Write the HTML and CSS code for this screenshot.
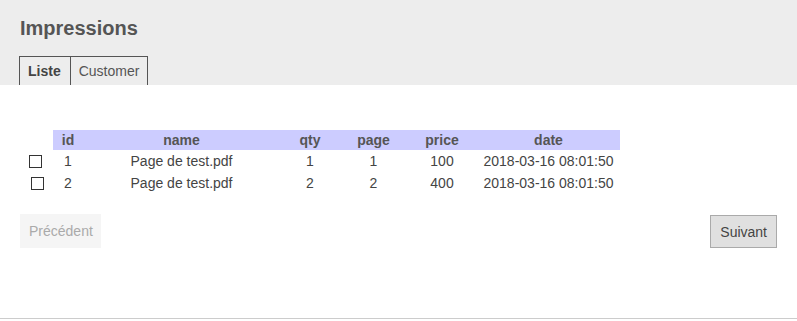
FILE: index.html
```html
<!DOCTYPE html>
<html>
<head>
    <meta charset="utf-8" />
    <title>Impressions</title>
    <link rel="stylesheet" href="styles.css">
</head>
<body>
    <div class="header">
        <h1>Impressions</h1>
        <div class="tabs">
            <a class="tab active" href="#">Liste</a>
            <a class="tab" href="#">Customer</a>
        </div>
    </div>

    <div class="content">
        <table class="list">
            <colgroup>
                <col class="c-check">
                <col class="c-id">
                <col class="c-name">
                <col class="c-qty">
                <col class="c-page">
                <col class="c-price">
                <col class="c-date">
            </colgroup>
            <thead>
                <tr>
                    <th class="check"></th>
                    <th>id</th>
                    <th>name</th>
                    <th>qty</th>
                    <th>page</th>
                    <th>price</th>
                    <th>date</th>
                </tr>
            </thead>
            <tbody>
                <tr>
                    <td class="check"><input type="checkbox"></td>
                    <td>1</td>
                    <td>Page de test.pdf</td>
                    <td>1</td>
                    <td>1</td>
                    <td>100</td>
                    <td>2018-03-16 08:01:50</td>
                </tr>
                <tr>
                    <td class="check"><input type="checkbox" class="shift"></td>
                    <td>2</td>
                    <td>Page de test.pdf</td>
                    <td>2</td>
                    <td>2</td>
                    <td>400</td>
                    <td>2018-03-16 08:01:50</td>
                </tr>
            </tbody>
        </table>

        <div class="pager">
            <button class="btn prev" disabled>Précédent</button>
            <button class="btn next">Suivant</button>
        </div>
    </div>
</body>
</html>
```

FILE: styles.css
```css
body {
    font-family: "Liberation Sans", Arial, sans-serif;
    font-size: 14px;
    color: #444;
    margin: 0;
    background: white;
}
.header {
    background: #ededed;
    padding: 17px 20px 0 19px;
}
h1 {
    margin: 0 0 16px 1px;
    font-size: 20px;
    line-height: 23px;
    color: #555;
}
.tabs {
    display: flex;
}
.tab {
    display: block;
    padding: 6px 9px 6px 8px;
    line-height: 16px;
    color: #555;
    text-decoration: none;
    border: 1px solid #555;
    border-bottom: none;
}
.tab + .tab {
    border-left: none;
    padding-right: 8px;
}
.tab.active {
    font-weight: bold;
    color: #444;
}
.content {
    padding: 45px 20px 0 20px;
    height: 188px;
    border-bottom: 1px solid #ccc;
}
.list {
    border-collapse: collapse;
    margin-left: 6px;
}
.c-check { width: 27px; }
.c-id { width: 30px; }
.c-name { width: 197px; }
.c-qty { width: 60px; }
.c-page { width: 67px; }
.c-price { width: 70px; }
.c-date { width: 143px; }
.list th {
    background: #ccccff;
    color: #555;
    padding: 2px 0;
    line-height: 16px;
    text-align: center;
}
.list th.check {
    background: none;
}
.list td {
    padding: 3px 0;
    line-height: 16px;
    text-align: center;
}
.list td.check {
    text-align: left;
}
.list input {
    appearance: none;
    -webkit-appearance: none;
    box-sizing: border-box;
    margin: 0 0 0 3px;
    width: 13px;
    height: 13px;
    border: 1px solid #333;
    border-radius: 0;
    background: white;
    vertical-align: -2px;
}
.list input.shift {
    margin-left: 5px;
}
.pager {
    display: flex;
    justify-content: space-between;
    margin-top: 20px;
}
.btn {
    font-family: "Liberation Sans", Arial, sans-serif;
    font-size: 14px;
    line-height: 16px;
    padding: 8px 9px;
    border: 1px solid #aaa;
    background: #e0e0e0;
    color: #444;
}
.btn.prev {
    padding: 8px 7px 8px 8px;
    border-color: #f5f5f5;
    background: #f5f5f5;
    color: #aaa;
}
.btn.next {
    margin-top: 1px;
    padding: 7px 9px;
}
```
